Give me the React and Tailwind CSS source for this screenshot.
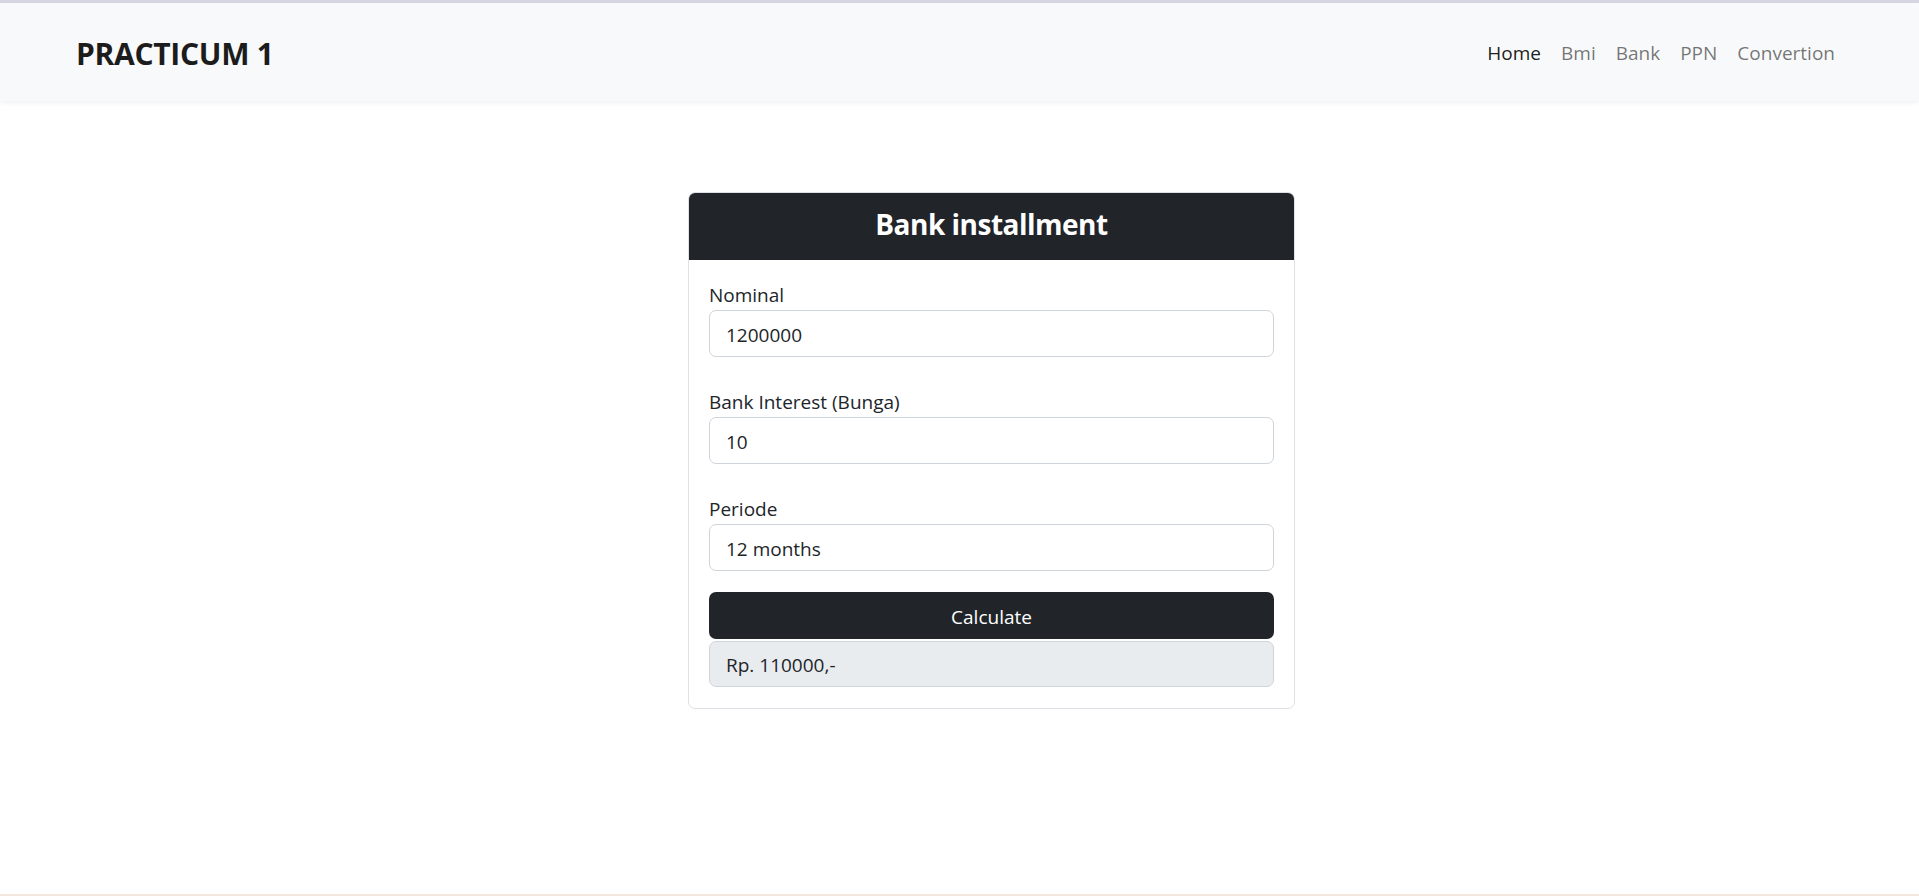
const links = ["Home", "Bmi", "Bank", "PPN", "Convertion"];

const Field = ({ label, value }) => (
  <div className="flex flex-col">
    <label className="text-[19px] leading-[30px] text-[#212529]">{label}</label>
    <input
      readOnly
      value={value}
      className="h-[47px] w-full rounded-[7px] border border-[#ced4da] bg-white px-[16px] pt-[2px] text-[19px] text-[#212529] outline-none"
    />
  </div>
);

const App = () => {
  return (
    <div
      className="flex h-[896px] flex-col bg-white"
      style={{ fontFamily: '"Open Sans", "Noto Sans", sans-serif' }}
    >
      {/* top line */}
      <div className="h-[3px] bg-[#d6d7e2]" />

      {/* Navbar */}
      <nav className="relative z-10 flex h-[98px] items-center justify-between bg-[#f8f9fa] pl-[76px] pr-[74px] shadow-[0_2px_5px_rgba(0,0,0,0.06)]">
        <span className="pt-[2px] text-[30px] font-bold tracking-[-0.3px] text-[#1c1c1c]">PRACTICUM 1</span>
        <ul className="flex items-center pt-[2px]">
          {links.map((l, i) => (
            <li key={l}>
              <a
                href="#"
                className={`block px-[10px] text-[19px] ${i === 0 ? "text-black/90" : "text-black/55"}`}
              >
                {l}
              </a>
            </li>
          ))}
        </ul>
      </nav>

      {/* Content */}
      <main className="flex flex-1 justify-center pl-[64px] pt-[91px]">
        <div className="h-fit w-[607px] overflow-hidden rounded-[7px] border border-[#dee2e6]">
          <div className="flex h-[67px] items-center justify-center bg-[#212529] pb-[5px]">
            <h2 className="text-[28px] font-bold tracking-[-0.5px] text-white">Bank installment</h2>
          </div>
          <div className="flex flex-col px-[20px] pb-[21px] pt-[20px]">
            <div className="flex flex-col gap-[30px]">
              <Field label="Nominal" value="1200000" />
              <Field label="Bank Interest (Bunga)" value="10" />
              <Field label="Periode" value="12 months" />
            </div>
            <button className="mt-[21px] h-[47px] w-full rounded-[7px] bg-[#212529] pt-[3px] text-[19px] text-white">
              Calculate
            </button>
            <div className="mt-[2px] flex h-[46px] items-center rounded-[7px] border border-[#ced4da] bg-[#e9ecef] px-[16px] pt-[2px] text-[19px] text-[#212529]">
              Rp. 110000,-
            </div>
          </div>
        </div>
      </main>

      {/* bottom line */}
      <div className="h-[2px] bg-[#f3e6dc]" />
    </div>
  );
};

export default App;
